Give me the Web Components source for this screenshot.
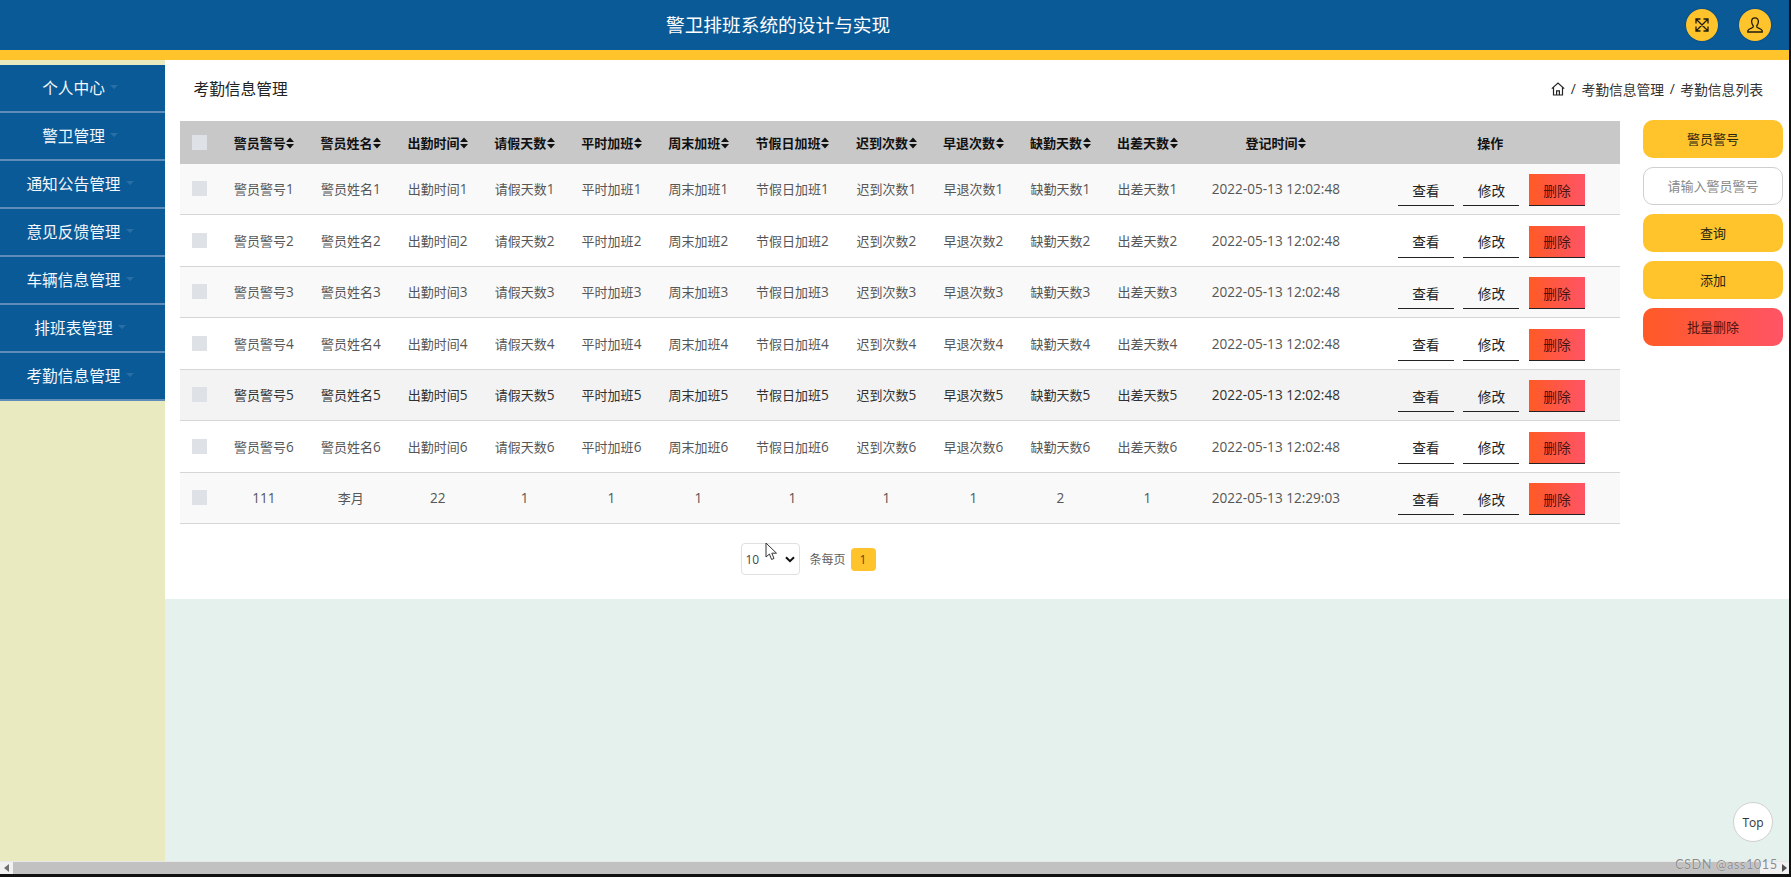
<!DOCTYPE html>
<html lang="zh">
<head>
<meta charset="utf-8">
<title>警卫排班系统的设计与实现</title>
<style>
html, body { margin: 0; height: 100%; background: #111; overflow: hidden; }
body { font-family: "Open Sans", "Noto Sans CJK SC", sans-serif; }
</style>
</head>
<body>
<app-shell></app-shell>

<script>
const YELLOW = '#ffc42c'
const BLUE = '#0a5a98'
const CJK = '"Open Sans", "Noto Sans CJK SC", sans-serif'

// ascii runs are set a touch larger than the chinese around them
function mixed(text) {
  return String(text).replace(/[\x21-\x7e ]+/g, m => `<span class="n">${m}</span>`)
}

class TopBar extends HTMLElement {
  constructor() {
    super()
    this.attachShadow({mode: 'open'}).innerHTML = `
    <style>
    :host { display: flex; align-items: center; height: 50px; box-sizing: content-box; background: ${BLUE};
      border-bottom: 10px solid ${YELLOW}; padding: 0 18px 0 666px; font-family: ${CJK}; }
    h1 { margin: 0; font-size: 18.7px; font-weight: 400; color: #fff; flex: 1; white-space: nowrap; line-height: 50px; }
    .round { width: 32px; height: 32px; border-radius: 50%; background: ${YELLOW}; display: flex;
      align-items: center; justify-content: center; margin-left: 21px; box-shadow: 0 0 2px rgba(0,0,0,.3); }
    svg { fill: none; stroke: #1d1a10; stroke-width: 1.3; }
    </style>
    <h1>警卫排班系统的设计与实现</h1>
    <div class="round">
      <svg width="16" height="16" viewBox="0 0 16 16">
        <path d="M2 2 14 14M14 2 2 14M2 6.5V2H6.5M9.5 2H14V6.5M14 9.5V14H9.5M6.5 14H2V9.5"/>
      </svg>
    </div>
    <div class="round">
      <svg width="18" height="18" viewBox="0 0 18 18">
        <path d="M9 1.8C6.9 1.8 5.6 3.4 5.6 5.6 5.6 7.4 6.4 8.8 7.2 9.7V11C7.2 11.9 2.4 12.4 1.8 14.6V16H16.2V14.6C15.6 12.4 10.8 11.9 10.8 11V9.7C11.6 8.8 12.4 7.4 12.4 5.6 12.4 3.4 11.1 1.8 9 1.8Z"/>
      </svg>
    </div>`
  }
}
customElements.define('top-bar', TopBar)

class MenuItem extends HTMLElement {
  constructor() {
    super()
    this.attachShadow({mode: 'open'}).innerHTML = `
    <style>
    :host { display: flex; align-items: center; justify-content: center; height: 46px; background: ${BLUE};
      border-bottom: 2px solid #5d8db8; color: #f3f6fa; font-size: 15.7px; font-family: ${CJK}; padding-right: 18px; }
    .wrap { position: relative; }
    .caret { position: absolute; right: -13px; top: 9px; width: 0; height: 0; border: 4px solid transparent;
      border-top: 4px solid #2a6ea6; border-bottom: 0; }
    </style>
    <span class="wrap"><slot></slot><i class="caret"></i></span>`
  }
}
customElements.define('menu-item', MenuItem)

class SideMenu extends HTMLElement {
  constructor() {
    super()
    this.attachShadow({mode: 'open'}).innerHTML = `
    <style>
    :host { display: block; width: 165px; flex: none; background: #eaeac0; padding-top: 4.5px; box-sizing: border-box; }
    </style>
    <slot></slot>`
  }
}
customElements.define('side-menu', SideMenu)

class ActionBtn extends HTMLElement {
  constructor() {
    super()
    this.attachShadow({mode: 'open'}).innerHTML = `
    <style>
    :host { display: flex; align-items: center; justify-content: center; width: 56px; height: 32px; box-sizing: border-box;
      border-bottom: 1.5px solid #222; color: #222; font-size: 13.7px; font-family: ${CJK}; }
    :host([kind="del"]) { background: linear-gradient(90deg, #ff5a26, #ff5465); color: #4a1410; }
    </style>
    <slot></slot>`
  }
}
customElements.define('action-btn', ActionBtn)

const GRID = '41px repeat(6, 86.9px) 101px repeat(4, 87px) 170px 1fr'
const CELL_STYLE = `
  :host { display: grid; grid-template-columns: ${GRID}; align-items: center; box-sizing: border-box; font-family: ${CJK}; }
  .c { text-align: center; white-space: nowrap; }
  .n { font-size: 13.6px; }
  .box { width: 15px; height: 15px; background: #dee2e6; margin-left: 12.5px; }
`

class HeadRow extends HTMLElement {
  constructor() {
    super()
    const sort = `<svg width="8" height="12" viewBox="0 0 8 12"><path d="M4 .5 8 5H0ZM4 11.5 0 7H8Z" fill="#111"/></svg>`
    const labels = ['警员警号', '警员姓名', '出勤时间', '请假天数', '平时加班', '周末加班', '节假日加班', '迟到次数', '早退次数', '缺勤天数', '出差天数', '登记时间']
    this.attachShadow({mode: 'open'}).innerHTML = `
    <style>${CELL_STYLE}
    :host { height: 43px; background: #c8c8c8; color: #111; font-size: 13px; font-weight: 700; }
    svg { vertical-align: -1px; margin-left: .5px; }
    </style>
    <div class="box"></div>
    ${labels.map(l => `<div class="c">${l}${sort}</div>`).join('')}
    <div class="c">操作</div>`
  }
}
customElements.define('head-row', HeadRow)

class DataRow extends HTMLElement {
  set cells(list) {
    this.attachShadow({mode: 'open'}).innerHTML = `
    <style>${CELL_STYLE}
    :host { height: 51.5px; border-bottom: 1.5px solid #d6d6d6; background: #fff; color: #565656; font-size: 13px; }
    :host([odd]) { background: #f9f9f9; }
    :host([hover]) { background: #f3f3f3; color: #303030; }
    .ops { display: flex; gap: 9.6px; padding-left: 37px; padding-top: 3px; }
    </style>
    <div class="box"></div>
    ${list.map(t => `<div class="c">${mixed(t)}</div>`).join('')}
    <div class="ops">
      <action-btn>查看</action-btn><action-btn>修改</action-btn><action-btn kind="del">删除</action-btn>
    </div>`
  }
}
customElements.define('data-row', DataRow)

class DataTable extends HTMLElement {
  constructor() {
    super()
    const root = this.attachShadow({mode: 'open'})
    root.innerHTML = `<style>:host { display: block; width: 1440px; flex: none; }</style><head-row></head-row>`
    const head = ['警员警号', '警员姓名', '出勤时间', '请假天数', '平时加班', '周末加班', '节假日加班', '迟到次数', '早退次数', '缺勤天数', '出差天数']
    for (let i = 1; i <= 6; i++) {
      const row = document.createElement('data-row')
      if (i % 2) row.setAttribute('odd', '')
      if (i == 5) row.setAttribute('hover', '')
      row.cells = [...head.map(h => h + i), '2022-05-13 12:02:48']
      root.appendChild(row)
    }
    const last = document.createElement('data-row')
    last.setAttribute('odd', '')
    last.cells = ['111', '李月', '22', '1', '1', '1', '1', '1', '1', '2', '1', '2022-05-13 12:29:03']
    root.appendChild(last)
  }
}
customElements.define('data-table', DataTable)

class PagerBar extends HTMLElement {
  constructor() {
    super()
    this.attachShadow({mode: 'open'}).innerHTML = `
    <style>
    :host { display: flex; align-items: center; height: 32px; margin-top: 19px; padding-left: 561px;
      font-family: ${CJK}; font-size: 12px; color: #606060; }
    .sel { width: 59px; height: 32px; box-sizing: border-box; border: 1.5px solid #e0e0e0; border-radius: 4px; background: #fff;
      display: flex; align-items: center; justify-content: space-between; padding: 0 3.5px 0 4px; color: #444; }
    .sel svg { display: block; }
    .txt { margin-left: 10px; }
    .page { width: 25px; height: 23px; margin-left: 5px; border-radius: 4px; background: ${YELLOW}; color: #5a4510;
      display: flex; align-items: center; justify-content: center; }
    </style>
    <div class="sel"><span>10</span>
      <svg width="10" height="7" viewBox="0 0 10 7"><path d="M1 1.2 5 5.2 9 1.2" fill="none" stroke="#111" stroke-width="2"/></svg>
    </div>
    <span class="txt">条每页</span>
    <div class="page">1</div>`
  }
}
customElements.define('pager-bar', PagerBar)

class SideActions extends HTMLElement {
  constructor() {
    super()
    this.attachShadow({mode: 'open'}).innerHTML = `
    <style>
    :host { display: flex; flex-direction: column; gap: 9.5px; width: 140px; flex: none; margin-left: 23.5px; margin-top: -.5px;
      font-family: ${CJK}; font-size: 13px; color: #2a2510; }
    div { height: 37.5px; border-radius: 10px; background: ${YELLOW}; display: flex; align-items: center; justify-content: center; box-sizing: border-box; }
    .in { background: #fff; border: 1.5px solid #cfcfcf; color: #888; }
    .del { background: linear-gradient(90deg, #ff5a26, #ff5465); color: #4a1410; }
    </style>
    <div>警员警号</div>
    <div class="in">请输入警员警号</div>
    <div>查询</div>
    <div>添加</div>
    <div class="del">批量删除</div>`
  }
}
customElements.define('side-actions', SideActions)

class MainPanel extends HTMLElement {
  constructor() {
    super()
    this.attachShadow({mode: 'open'}).innerHTML = `
    <style>
    :host { display: block; flex: 1; font-family: ${CJK}; }
    .card { background: #fff; height: 539px; box-sizing: border-box; padding: 0 0 0 14.5px; }
    .crumbs { display: flex; align-items: center; justify-content: space-between; height: 60.5px; box-sizing: border-box;
      padding: 0 26px 3px 14px; }
    h2 { margin: 0; font-size: 15.7px; font-weight: 400; color: #222; }
    .path { display: flex; align-items: center; gap: 5.5px; font-size: 13.8px; color: #333; }
    .path svg { fill: none; stroke: #222; stroke-width: 1.2; }
    .body { display: flex; }
    </style>
    <div class="card">
      <div class="crumbs">
        <h2>考勤信息管理</h2>
        <div class="path">
          <svg width="14" height="14" viewBox="0 0 14 14"><path d="M.8 6.6 7 1 13.2 6.6M2.5 5.4V13H11.5V5.4M5.6 13V8.8H8.4V13"/></svg>
          <span>/</span><span>考勤信息管理</span><span>/</span><span>考勤信息列表</span>
        </div>
      </div>
      <div class="body">
        <div>
          <data-table></data-table>
          <pager-bar></pager-bar>
        </div>
        <side-actions></side-actions>
      </div>
    </div>`
  }
}
customElements.define('main-panel', MainPanel)

class FakeScrollbar extends HTMLElement {
  constructor() {
    super()
    this.attachShadow({mode: 'open'}).innerHTML = `
    <style>
    :host { display: flex; height: 13px; box-sizing: border-box; background: #f1f1f1; border-top: 1px solid #e8e8e8; }
    .btn { width: 13px; display: flex; align-items: center; justify-content: center; flex: none; }
    .btn:last-child { width: 29px; justify-content: flex-end; padding-right: 2px; box-sizing: border-box; }
    .thumb { flex: 1; background: #c1c1c1; }
    </style>
    <div class="btn"><svg width="5" height="8" viewBox="0 0 5 8"><path d="M5 0V8L0 4Z" fill="#707070"/></svg></div>
    <div class="thumb"></div>
    <div class="btn"><svg width="5" height="8" viewBox="0 0 5 8"><path d="M0 0V8L5 4Z" fill="#505050"/></svg></div>`
  }
}
customElements.define('fake-scrollbar', FakeScrollbar)

class AppShell extends HTMLElement {
  constructor() {
    super()
    this.attachShadow({mode: 'open'}).innerHTML = `
    <style>
    :host { display: flex; flex-direction: column; width: 1789px; height: 874px; position: relative; background: #e5f1ec; }
    .mid { display: flex; flex: 1; min-height: 0; }
    .top { position: absolute; left: 1733px; top: 802px; width: 40px; height: 40px; box-sizing: border-box; border-radius: 50%;
      background: #fff; border: 1px solid #d0d0d0; display: flex; align-items: center; justify-content: center;
      font: 12px ${CJK}; color: #333; }
    .mark { position: absolute; left: 1675px; top: 856px; font: 12.8px "Lato", sans-serif; letter-spacing: .5px; color: #8c8c8c;
      text-shadow: 0 0 1px #fff; white-space: nowrap; }
    .cursor { position: absolute; left: 765px; top: 542px; }
    </style>
    <top-bar></top-bar>
    <div class="mid">
      <side-menu>
        <menu-item>个人中心</menu-item>
        <menu-item>警卫管理</menu-item>
        <menu-item>通知公告管理</menu-item>
        <menu-item>意见反馈管理</menu-item>
        <menu-item>车辆信息管理</menu-item>
        <menu-item>排班表管理</menu-item>
        <menu-item>考勤信息管理</menu-item>
      </side-menu>
      <main-panel></main-panel>
    </div>
    <fake-scrollbar></fake-scrollbar>
    <div class="top">Top</div>
    <div class="mark">CSDN @ass1015</div>
    <svg class="cursor" width="14" height="20" viewBox="0 0 14 20">
      <path d="M1 1V15L4.4 12 6.6 17.5 9 16.4 6.8 11.2H11.5Z" fill="#fff" stroke="#333" stroke-width="1"/>
    </svg>`
  }
}
customElements.define('app-shell', AppShell)
</script>
</body>
</html>
